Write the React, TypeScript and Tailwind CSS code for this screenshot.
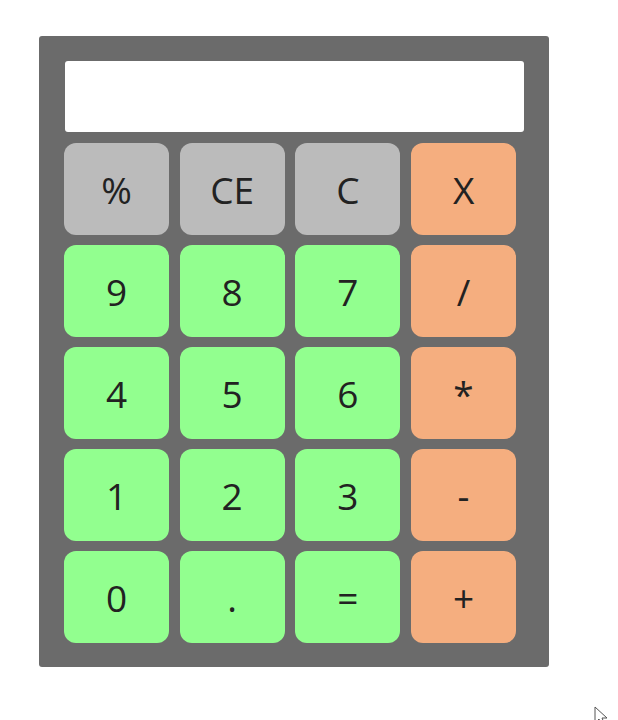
import React from "react";

type Key = { label: string; kind: "fn" | "num" | "op" };

const keys: Key[] = [
  { label: "%", kind: "fn" },
  { label: "CE", kind: "fn" },
  { label: "C", kind: "fn" },
  { label: "X", kind: "op" },
  { label: "9", kind: "num" },
  { label: "8", kind: "num" },
  { label: "7", kind: "num" },
  { label: "/", kind: "op" },
  { label: "4", kind: "num" },
  { label: "5", kind: "num" },
  { label: "6", kind: "num" },
  { label: "*", kind: "op" },
  { label: "1", kind: "num" },
  { label: "2", kind: "num" },
  { label: "3", kind: "num" },
  { label: "-", kind: "op" },
  { label: "0", kind: "num" },
  { label: ".", kind: "num" },
  { label: "=", kind: "num" },
  { label: "+", kind: "op" },
];

const App: React.FC = () => {
  return (
    <div
      className="relative w-[618px] h-[720px] bg-white overflow-hidden"
      style={{ fontFamily: '"Open Sans", "Noto Sans", sans-serif' }}
    >
      {/* Calculator body */}
      <div className="ml-[39px] mt-[36px] w-[510px] h-[631px] bg-[#6b6b6b] rounded-[3px] pl-[25px] pt-[25px]">
        {/* Display */}
        <div className="ml-[1px] w-[459px] h-[71px] bg-white rounded-[3px]" />

        {/* Keys */}
        <div className="mt-[11px] grid grid-cols-[repeat(4,105px)] gap-x-[10.7px] gap-y-[10px]">
          {keys.map((k) => (
            <button
              key={k.label}
              className={`h-[92px] rounded-[12px] flex items-center justify-center text-[37px] text-[#222] leading-none ${
                k.kind === "fn"
                  ? "bg-[#bbbbbb]"
                  : k.kind === "op"
                  ? "bg-[#f5ae7f]"
                  : "bg-[#92ff8f]"
              }`}
            >
              {k.label}
            </button>
          ))}
        </div>
      </div>

      {/* Mouse pointer */}
      <svg
        className="absolute left-[594px] top-[706px]"
        width="16"
        height="22"
        viewBox="0 0 16 22"
      >
        <path d="M1 1 L1 17 L5 13 L8 20 L11 19 L8 12 L13 12 Z" fill="white" stroke="#555" strokeWidth="1" />
      </svg>
    </div>
  );
};

export default App;
